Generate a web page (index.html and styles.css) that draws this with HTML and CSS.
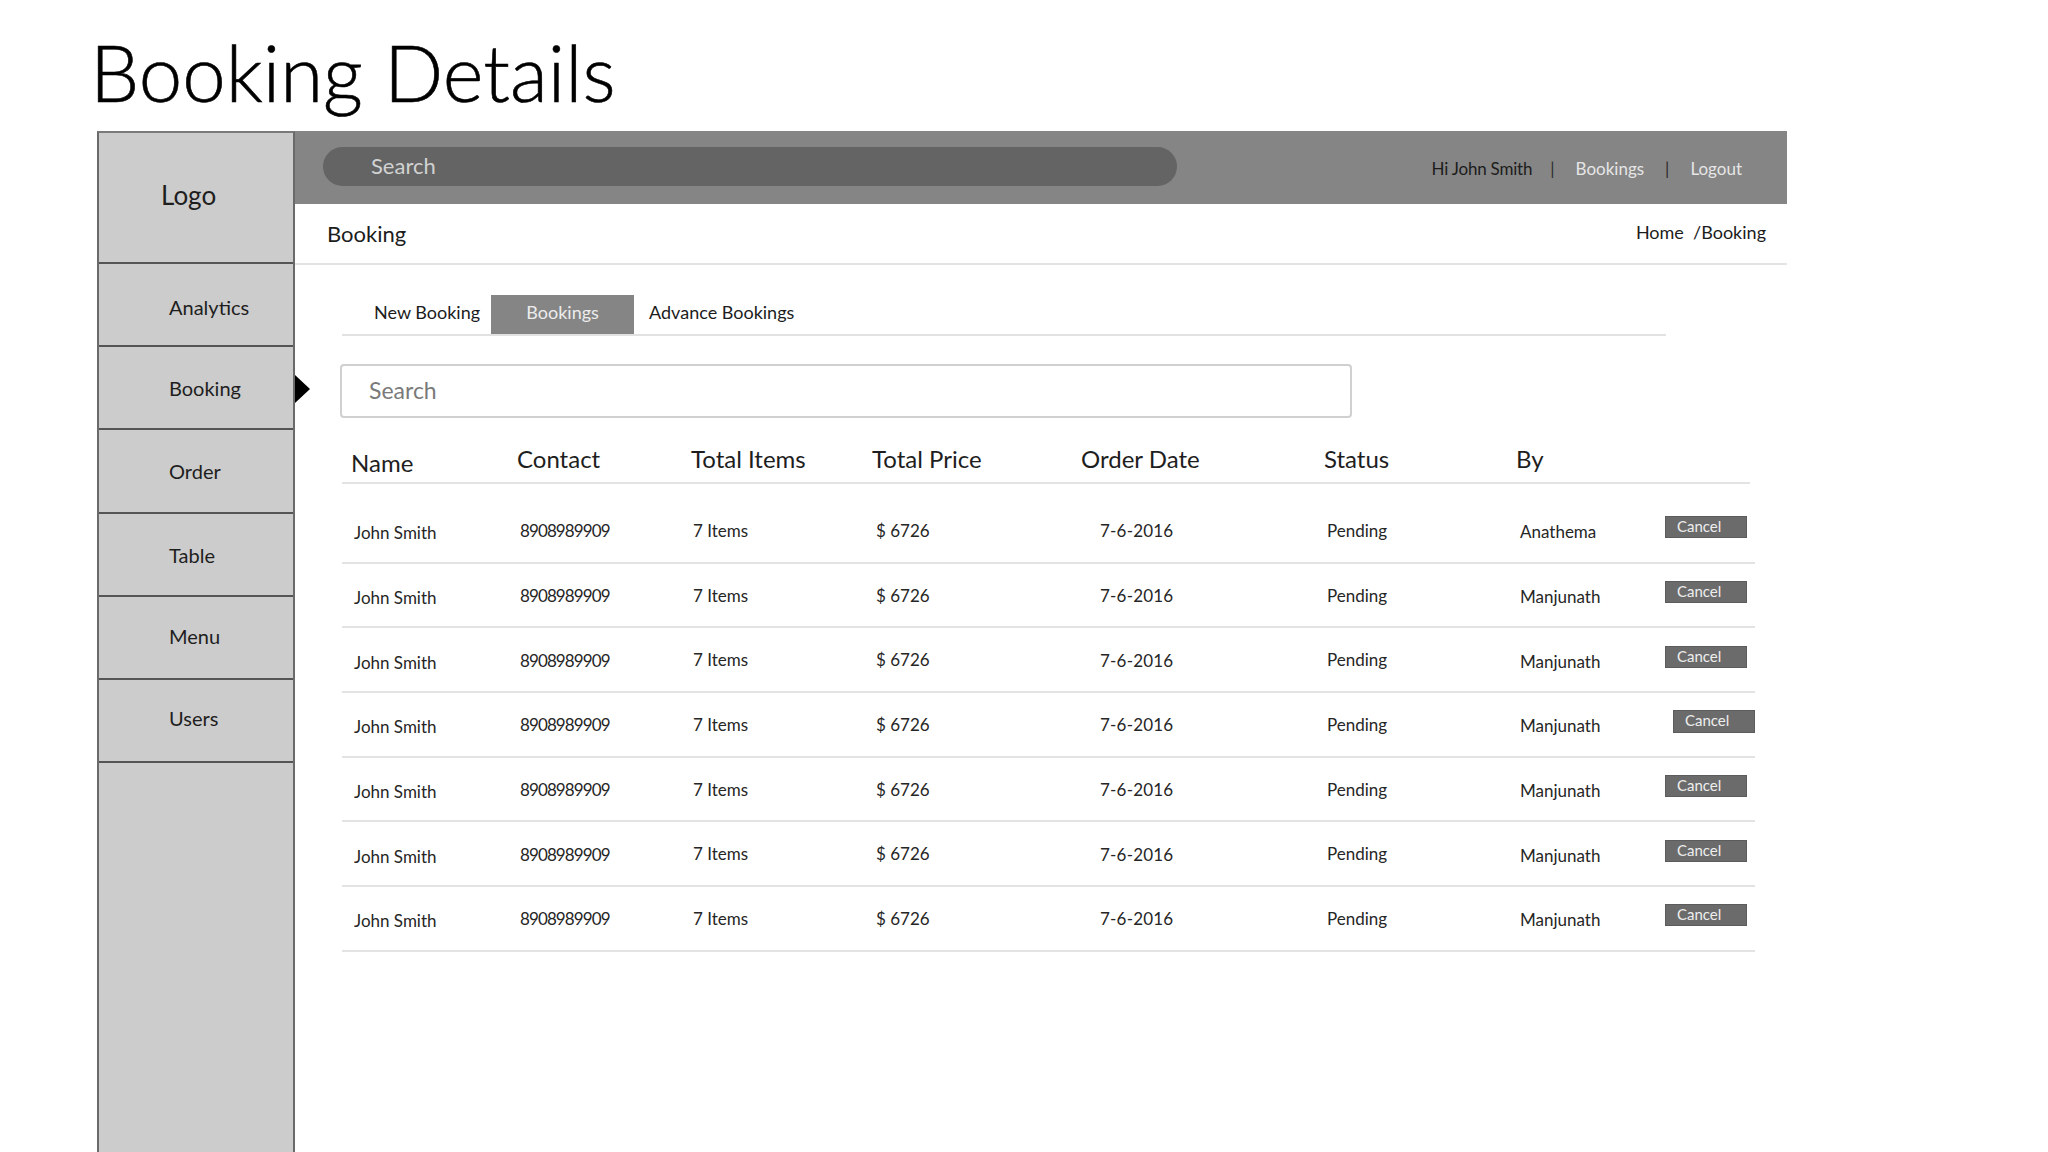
FILE: index.html
```html
<!DOCTYPE html>
<html lang="en">
<head>
<meta charset="utf-8">
<title>Booking Details</title>
<link rel="stylesheet" href="styles.css">
</head>
<body>
<h1 class="title">Booking Details</h1>
<div class="app">
  <aside class="sidebar">
    <div class="logo">Logo</div>
    <nav class="nav">
      <div class="nav-item">Analytics</div>
      <div class="nav-item active">Booking<span class="arrow"></span></div>
      <div class="nav-item">Order</div>
      <div class="nav-item">Table</div>
      <div class="nav-item">Menu</div>
      <div class="nav-item">Users</div>
    </nav>
  </aside>
  <main class="main">
    <header class="topbar">
      <div class="top-search">Search</div>
      <div class="usernav">
        <span class="user">Hi John Smith</span>
        <span class="sep">|</span>
        <span class="link">Bookings</span>
        <span class="sep">|</span>
        <span class="link">Logout</span>
      </div>
    </header>
    <div class="pagehead">
      <span class="page-title">Booking</span>
      <span class="crumb">Home &nbsp;/Booking</span>
    </div>
    <div class="content">
      <div class="tabs">
        <span class="tab first">New Booking</span>
        <span class="tab active">Bookings</span>
        <span class="tab">Advance Bookings</span>
      </div>
      <div class="search">Search</div>
      <div class="table">
        <div class="thead">
          <span>Name</span><span>Contact</span><span>Total Items</span><span>Total Price</span><span>Order Date</span><span>Status</span><span>By</span>
        </div>
        <div class="tbody">
          <div class="row"><span class="name">John Smith</span><span class="num">8908989909</span><span>7 Items</span><span>$ 6726</span><span class="date">7-6-2016</span><span>Pending</span><span class="by">Anathema</span><span><span class="btn">Cancel</span></span></div>
          <div class="row"><span class="name">John Smith</span><span class="num">8908989909</span><span>7 Items</span><span>$ 6726</span><span class="date">7-6-2016</span><span>Pending</span><span class="by">Manjunath</span><span><span class="btn">Cancel</span></span></div>
          <div class="row"><span class="name">John Smith</span><span class="num">8908989909</span><span>7 Items</span><span>$ 6726</span><span class="date">7-6-2016</span><span>Pending</span><span class="by">Manjunath</span><span><span class="btn">Cancel</span></span></div>
          <div class="row"><span class="name">John Smith</span><span class="num">8908989909</span><span>7 Items</span><span>$ 6726</span><span class="date">7-6-2016</span><span>Pending</span><span class="by">Manjunath</span><span><span class="btn shifted">Cancel</span></span></div>
          <div class="row"><span class="name">John Smith</span><span class="num">8908989909</span><span>7 Items</span><span>$ 6726</span><span class="date">7-6-2016</span><span>Pending</span><span class="by">Manjunath</span><span><span class="btn">Cancel</span></span></div>
          <div class="row"><span class="name">John Smith</span><span class="num">8908989909</span><span>7 Items</span><span>$ 6726</span><span class="date">7-6-2016</span><span>Pending</span><span class="by">Manjunath</span><span><span class="btn">Cancel</span></span></div>
          <div class="row"><span class="name">John Smith</span><span class="num">8908989909</span><span>7 Items</span><span>$ 6726</span><span class="date">7-6-2016</span><span>Pending</span><span class="by">Manjunath</span><span><span class="btn">Cancel</span></span></div>
        </div>
      </div>
    </div>
  </main>
</div>
</body>
</html>
```
FILE: styles.css
```css
* { box-sizing: border-box; }
html, body { margin: 0; padding: 0; background: #fff; }
body {
  font-family: Lato, "Open Sans", sans-serif;
  color: #262626;
  width: 2048px;
  height: 1152px;
  overflow: hidden;
}

.title {
  margin: 0;
  height: 131px;
  padding: 25px 0 0 90px;
  font-family: Lato, sans-serif;
  font-weight: 300;
  font-size: 78px;
  line-height: 94px;
  color: #000;
  -webkit-text-stroke: 0.6px #000;
}

.app {
  display: flex;
  margin-left: 97px;
  width: 1690px;
  height: 1021px;
}

/* Sidebar */
.sidebar {
  width: 198px;
  flex: none;
  background: #cccccc;
  border-left: 2px solid #6a6a6a;
  border-right: 2px solid #6a6a6a;
  border-top: 2px solid #7a7a7a;
}
.logo {
  height: 131px;
  border-bottom: 2px solid #555;
  display: flex;
  align-items: center;
  padding-left: 62px;
  font-size: 26px;
  color: #1e1e1e;
  padding-bottom: 6px;
}
.nav-item {
  position: relative;
  height: 83.2px;
  border-bottom: 2px solid #555;
  display: flex;
  align-items: center;
  padding-left: 70px;
  padding-top: 1px;
  font-size: 20px;
  color: #1e1e1e;
}
.nav-item:first-child { padding-top: 5px; }
.nav-item:nth-child(5) { padding-top: 0; padding-bottom: 2px; }
.nav-item:nth-child(6) { padding-top: 0; padding-bottom: 5px; }
.arrow {
  position: absolute;
  left: calc(100% + 2px);
  top: 50%;
  margin-top: -13px;
  width: 0;
  height: 0;
  border-left: 15px solid #000;
  border-top: 14px solid transparent;
  border-bottom: 14px solid transparent;
}

/* Main */
.main {
  flex: 1;
  display: flex;
  flex-direction: column;
}
.topbar {
  height: 73px;
  background: #858585;
  display: flex;
  align-items: center;
  padding: 0 45px 0 28px;
}
.top-search {
  width: 854px;
  height: 39px;
  margin-top: -3px;
  border-radius: 20px;
  background: #646464;
  color: #d2d2d2;
  font-size: 22px;
  line-height: 38px;
  padding-left: 48px;
}
.usernav {
  margin-left: auto;
  display: flex;
  align-items: center;
  gap: 21px;
  font-size: 17px;
  padding-top: 2px;
}
.usernav .user { color: #1c1c1c; letter-spacing: -0.2px; margin-right: -3px; }
.usernav .sep { color: #2c2c2c; }
.usernav .link { color: #e6e6e6; }

.pagehead {
  height: 61px;
  border-bottom: 2px solid #e4e4e4;
  display: flex;
  align-items: center;
  padding: 0 21px 0 32px;
  justify-content: space-between;
}
.page-title { font-size: 22px; color: #1c1c1c; }
.crumb { font-size: 18px; color: #1c1c1c; margin-top: -3px; }

.content {
  padding-left: 45px;
}
.tabs {
  margin-top: 30px;
  margin-left: 2px;
  width: 1324px;
  border-bottom: 2px solid #e2e2e2;
  display: flex;
  align-items: stretch;
  height: 41px;
  font-size: 18px;
}
.tab {
  display: flex;
  align-items: center;
  color: #1c1c1c;
  height: 39px;
  padding-bottom: 6px;
}
.tab.first { padding-left: 32px; padding-right: 11px; }
.tab.active {
  background: #858585;
  color: #ececec;
  padding-left: 39px;
  padding-right: 39px;
  width: 143px;
  justify-content: center;
  margin-right: 15px;
}

.search {
  margin-top: 28px;
  width: 1012px;
  height: 54px;
  border: 2px solid #d0d0d0;
  border-radius: 4px;
  padding-left: 27px;
  font-size: 23px;
  line-height: 49px;
  color: #7a7a7a;
}

.table {
  margin-left: 2px;
  width: 1413px;
}
.thead {
  display: grid;
  grid-template-columns: 166px 174px 181px 209px 243px 192px 1fr;
  padding: 26px 0 4px 9px;
  line-height: 30px;
  font-size: 24px;
  color: #1e1e1e;
  border-bottom: 2px solid #e3e3e3;
  width: 1408px;
}
.thead span:first-child { margin-top: 4px; }
.tbody { padding-top: 15px; }
.row {
  display: grid;
  grid-template-columns: 166px 173px 183px 224px 227px 193px 145px 1fr;
  align-items: center;
  height: 64.7px;
  padding-left: 12px;
  border-bottom: 2px solid #e3e3e3;
  font-size: 17px;
  color: #262626;
}
.row .name { margin-top: 5px; }
.row .num { letter-spacing: -0.9px; margin-top: 1px; }
.row .date { letter-spacing: 0.2px; margin-top: 1px; }
.row .by { margin-top: 3px; }
.btn {
  display: inline-block;
  width: 82px;
  height: 22px;
  margin-bottom: 6px;
  background: #6b6b6b;
  border: 1px solid #5c5c5c;
  color: #eeeeee;
  font-size: 15px;
  line-height: 18px;
  padding-left: 11px;
  vertical-align: middle;
}
.btn.shifted { margin-left: 8px; height: 23px; }
```
